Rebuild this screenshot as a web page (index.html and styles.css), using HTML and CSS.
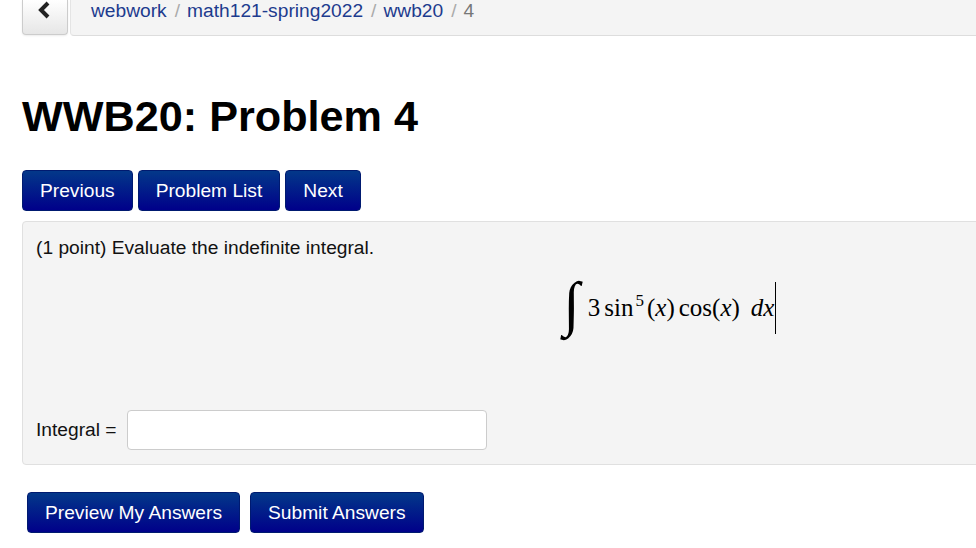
FILE: index.html
```html
<!DOCTYPE html>
<html lang="en">
<head>
  <meta charset="UTF-8">
  <title>WWB20: Problem 4</title>
  <link rel="stylesheet" href="styles.css">
</head>
<body>
  <div class="page">
    <div class="topbar">
      <a class="back" href="#" aria-label="Back">
        <svg width="14" height="18" viewBox="0 0 14 18"><polyline points="10,2 3,9 10,16" fill="none" stroke="#222" stroke-width="4" stroke-linejoin="miter"/></svg>
      </a>
      <div class="crumbs">
        <a href="#">webwork</a><span class="sep">/</span><a href="#">math121-spring2022</a><span class="sep">/</span><a href="#">wwb20</a><span class="sep">/</span><span class="current">4</span>
      </div>
    </div>

    <h1>WWB20: Problem 4</h1>

    <div class="nav">
      <button class="btn">Previous</button>
      <button class="btn">Problem List</button>
      <button class="btn">Next</button>
    </div>

    <div class="problem">
      <p>(1 point) Evaluate the indefinite integral.</p>
      <div class="math-row">
        <div class="math"><span class="int">∫</span><span class="num">3</span><span class="fn">sin</span><sup>5</sup><span class="par">(</span><i>x</i><span class="par">)</span><span class="fn cos">cos</span><span class="par">(</span><i>x</i><span class="par">)</span><i class="dx">dx</i><span class="caret"></span></div>
      </div>
      <div class="answer">
        <label for="ans">Integral =</label>
        <input type="text" id="ans">
      </div>
    </div>

    <div class="submit-row">
      <button class="btn">Preview My Answers</button>
      <button class="btn">Submit Answers</button>
    </div>
  </div>
</body>
</html>
```

FILE: styles.css
```css
body {
  margin: 0;
  font-family: "Liberation Sans", Arial, sans-serif;
  font-size: 19.2px;
  color: #111;
  background: #fff;
  overflow: hidden;
}
.page {
  margin-left: 22px;
  width: 1294px;
}
.topbar {
  display: flex;
  height: 36px;
}
.back {
  width: 46px;
  height: 35px;
  display: flex;
  align-items: flex-start;
  justify-content: center;
  padding-top: 1px;
  box-sizing: border-box;
  background: linear-gradient(#ffffff, #e6e6e6);
  border: 1px solid #ccc;
  border-top: none;
  border-radius: 0 0 4px 4px;
  box-shadow: 0 1px 2px rgba(0, 0, 0, 0.08);
}
.crumbs {
  flex: 1;
  margin-left: 2px;
  padding-left: 20px;
  height: 35px;
  line-height: 22px;
  background: #f4f4f4;
  border-bottom: 1px solid #ddd;
  border-left: 1px solid #e4e4e4;
  border-radius: 0 0 0 4px;
}
.crumbs a {
  color: #1d3b8e;
  text-decoration: none;
}
.crumbs .sep {
  color: #aaa;
  padding: 0 7px 0 8px;
}
.crumbs .current {
  color: #777;
}
h1 {
  font-size: 43.2px;
  line-height: 47px;
  font-weight: bold;
  color: #000;
  margin: 57px 0 30px;
}
.nav, .submit-row {
  display: flex;
  gap: 5px;
}
.submit-row {
  gap: 10px;
  margin: 27px 0 0 5px;
}
.btn {
  font-family: "Liberation Sans", Arial, sans-serif;
  font-size: 19.2px;
  line-height: 23px;
  height: 41px;
  padding: 0 17px;
  color: #fff;
  border: 1px solid #001a70;
  border-radius: 4px;
  background: linear-gradient(#033889, #00008a);
  cursor: pointer;
}
.problem {
  margin-top: 10px;
  padding: 15px 13px 14px;
  background: #f4f4f4;
  border: 1px solid #e0e0e0;
  border-radius: 4px;
}
.problem p {
  margin: 0;
  line-height: 22px;
}
.math-row {
  margin: 22px 0 0 526px;
  height: 56px;
}
.math {
  display: inline-flex;
  align-items: center;
  height: 53px;
  font-family: "Liberation Serif", "Times New Roman", serif;
  font-size: 25px;
  color: #000;
}
.math .int {
  font-size: 54px;
  font-style: italic;
  line-height: 53px;
  margin: -6px 9px 0 2px;
  transform: scale(1.1, 1.12);
}
.math .num {
  margin-right: 4px;
}
.math sup {
  font-size: 17px;
  align-self: flex-start;
  margin: 10px 3px 0 2px;
}
.math .cos {
  margin-left: 4px;
}
.math .dx {
  margin-left: 11px;
}
.math .caret {
  width: 1px;
  height: 52px;
  background: #000;
  margin-left: 1px;
}
.answer {
  display: flex;
  align-items: center;
  gap: 10px;
  margin-top: 73px;
}
.answer input {
  width: 360px;
  height: 40px;
  box-sizing: border-box;
  border: 1px solid #ccc;
  border-radius: 4px;
  background: #fff;
  font-size: 18px;
  padding: 4px 8px;
}
```
